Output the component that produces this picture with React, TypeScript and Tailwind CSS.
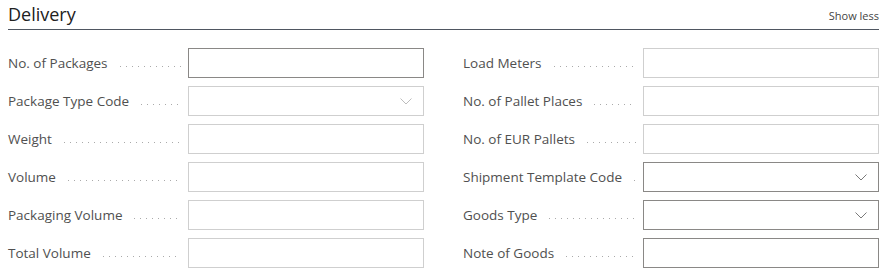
import React from "react";

type Field = { label: string; dark?: boolean; select?: boolean };

const left: Field[] = [
  { label: "No. of Packages", dark: true },
  { label: "Package Type Code", select: true },
  { label: "Weight" },
  { label: "Volume" },
  { label: "Packaging Volume" },
  { label: "Total Volume" },
];

const right: Field[] = [
  { label: "Load Meters" },
  { label: "No. of Pallet Places" },
  { label: "No. of EUR Pallets" },
  { label: "Shipment Template Code", dark: true, select: true },
  { label: "Goods Type", dark: true, select: true },
  { label: "Note of Goods", dark: true },
];

function Chevron({ dark }: { dark?: boolean }) {
  return (
    <svg width="12" height="7" viewBox="0 0 12 7" className="absolute right-[11px] top-[11px]">
      <path d="M0.5 0.5 L6 6 L11.5 0.5" fill="none" stroke={dark ? "#7a7a7a" : "#bdbdbd"} strokeWidth="1" />
    </svg>
  );
}

function Row({ f }: { f: Field }) {
  return (
    <div className="flex h-[30px] items-center">
      <div className="flex w-[180px] items-center pr-[7px]">
        <span className="mt-[1px] whitespace-nowrap text-[13.5px] text-[#505050]">{f.label}</span>
        <span className="ml-[12px] mt-[6px] h-px flex-1 bg-[repeating-linear-gradient(to_right,#aaaaaa_0_1px,transparent_1px_6px)]" />
      </div>
      <div
        className={
          "relative h-[30px] w-[236px] border bg-white " +
          (f.dark ? "border-[#8a8886]" : "border-[#cfcfcf]")
        }
      >
        {f.select && <Chevron dark={f.dark} />}
      </div>
    </div>
  );
}

export default function App() {
  return (
    <div className="h-[274px] w-[887px] bg-white px-2" style={{ fontFamily: '"Open Sans", sans-serif' }}>
      <div className="flex h-[30px] items-start justify-between border-b border-[#4f5661]">
        <div className="pt-[2px] text-[18px] leading-[24px] text-[#212121]">Delivery</div>
        <div className="pt-[9px] text-[11px] leading-[14px] text-[#444444]">Show less</div>
      </div>
      <div className="flex gap-[39px] pt-[18px]">
        <div className="flex w-[416px] flex-col gap-2">
          {left.map((f) => (
            <Row key={f.label} f={f} />
          ))}
        </div>
        <div className="flex w-[416px] flex-col gap-2">
          {right.map((f) => (
            <Row key={f.label} f={f} />
          ))}
        </div>
      </div>
    </div>
  );
}
